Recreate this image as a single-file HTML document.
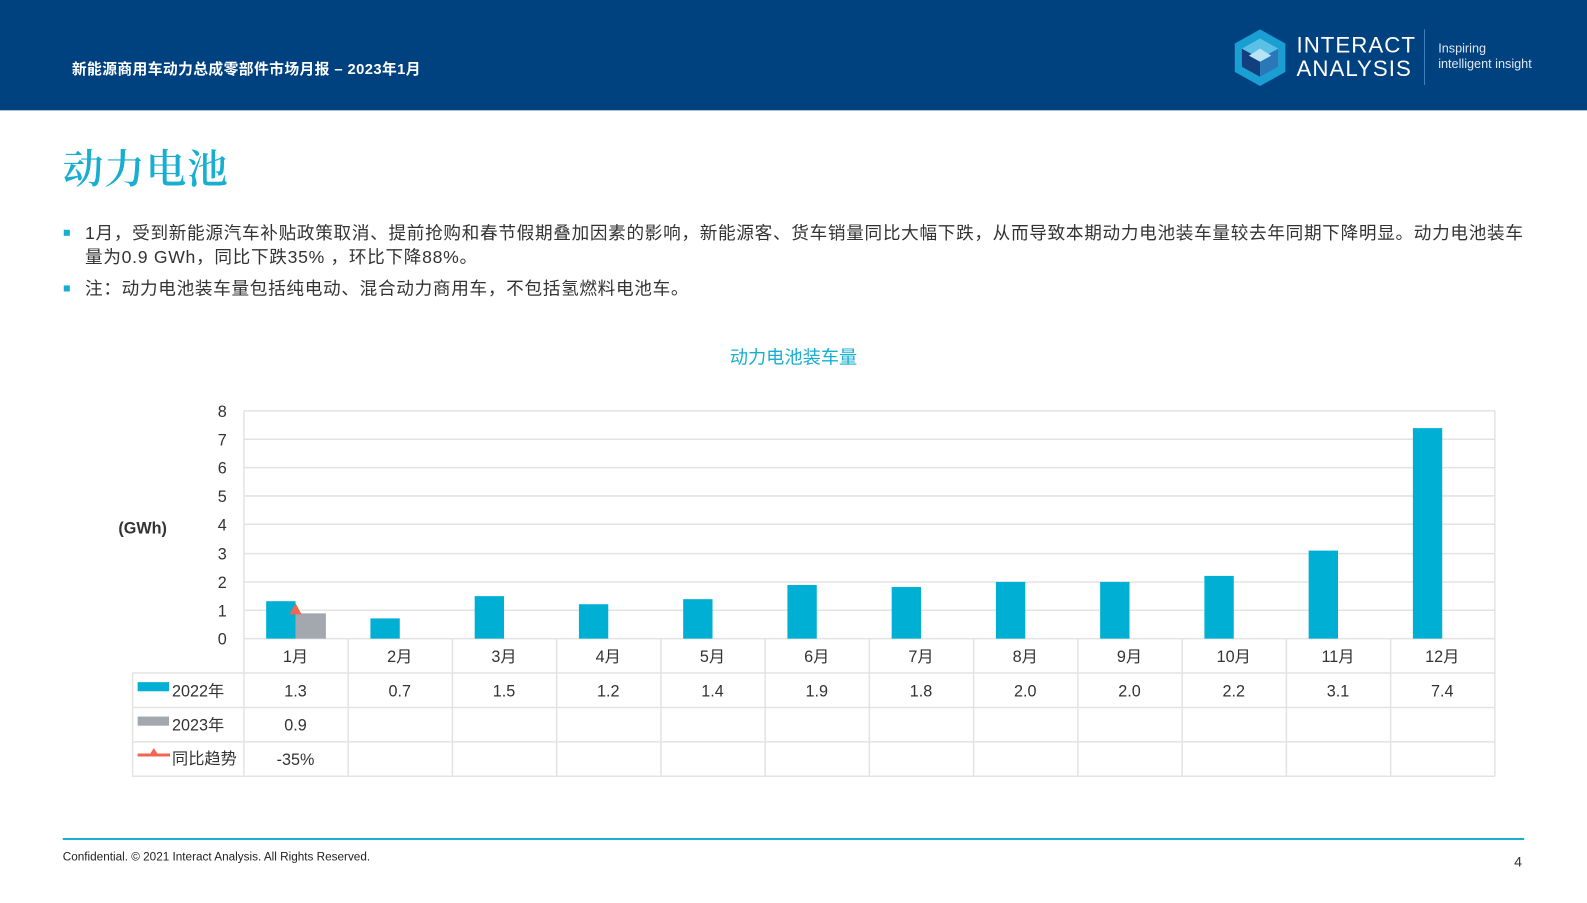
<!DOCTYPE html>
<html><head><meta charset="utf-8"><style>
*{margin:0;padding:0;box-sizing:border-box}
body{width:1587px;height:892px;position:relative;background:#fff;font-family:"Liberation Sans","Noto Sans CJK SC",sans-serif;overflow:hidden;color:#333}
#w{position:absolute;left:0;top:0;width:1568px;height:882px;transform:scale(1.0121);transform-origin:0 0}
.hdr{position:absolute;left:0;top:0;width:1580px;height:109px;background:#004180}
.hdr .t{position:absolute;left:71px;top:57px;color:#fff;font-size:14.6px;font-weight:bold;letter-spacing:0.4px}
.title{position:absolute;left:62px;top:136px;font-family:"Noto Serif CJK SC",serif;font-weight:600;font-size:40px;color:#18aed0;letter-spacing:1px}
.p{position:absolute;left:84px;width:1430px;font-size:17.4px;line-height:24px;color:#333;letter-spacing:0.7px}
.b{position:absolute;left:63px;width:6px;height:6px;background:#18aed0}
.ct{position:absolute;left:0;width:1568px;text-align:center;top:339px;font-size:18px;color:#18aed0}
.foot{position:absolute;left:62px;top:828px;width:1444px;height:2px;background:#18aed0}
</style></head><body><div id="w">
<div class="hdr">
<div class="t">新能源商用车动力总成零部件市场月报 – 2023年1月</div>
<svg style="position:absolute;left:1218px;top:28px" width="54" height="58" viewBox="0 0 54 58">
<polygon points="27,1 52,15 52,43 27,57 2,43 2,15" fill="#1a9fd2"/>
<polygon points="27,10 45,20 45,38 27,48 9,38 9,20" fill="#5bc0e6"/>
<polygon points="9,20 27,30 27,48 9,38" fill="#123f7e"/>
<polygon points="45,20 27,30 27,48 45,38" fill="#2a78b8"/>
<polygon points="27,20 38,27 27,33 16,27" fill="#b7e4f5"/>
</svg>
<div style="position:absolute;left:1281px;top:33px;color:#fff;font-size:22px;line-height:23px;letter-spacing:1px">INTERACT<br>ANALYSIS</div>
<div style="position:absolute;left:1407px;top:29px;width:1px;height:55px;background:#3d7fc0"></div>
<div style="position:absolute;left:1421px;top:41px;color:#dfe8f3;font-size:12.5px;line-height:15px">Inspiring<br>intelligent insight</div>
</div>
<div class="title">动力电池</div>
<div class="b" style="top:227px"></div>
<div class="p" style="top:218px">1月，受到新能源汽车补贴政策取消、提前抢购和春节假期叠加因素的影响，新能源客、货车销量同比大幅下跌，从而导致本期动力电池装车量较去年同期下降明显。动力电池装车量为0.9 GWh，同比下跌35% ，环比下降88%。</div>
<div class="b" style="top:282px"></div>
<div class="p" style="top:273px">注：动力电池装车量包括纯电动、混合动力商用车，不包括氢燃料电池车。</div>
<div class="ct">动力电池装车量</div>
<svg style="position:absolute;left:0;top:0" width="1587" height="892" font-family="Liberation Sans, Noto Sans CJK SC, sans-serif">
<g stroke="#e3e3e3" stroke-width="1.5">
<line x1="241" y1="406" x2="1477" y2="406"/><line x1="241" y1="434" x2="1477" y2="434"/>
<line x1="241" y1="462" x2="1477" y2="462"/><line x1="241" y1="490" x2="1477" y2="490"/>
<line x1="241" y1="518" x2="1477" y2="518"/><line x1="241" y1="547" x2="1477" y2="547"/>
<line x1="241" y1="575" x2="1477" y2="575"/><line x1="241" y1="603" x2="1477" y2="603"/>
<line x1="241" y1="631" x2="1477" y2="631"/>
<line x1="241" y1="406" x2="241" y2="767"/><line x1="1477" y1="406" x2="1477" y2="767"/>
<line x1="131" y1="665" x2="1477" y2="665"/><line x1="131" y1="699" x2="1477" y2="699"/>
<line x1="131" y1="733" x2="1477" y2="733"/><line x1="131" y1="767" x2="1477" y2="767"/>
<line x1="131" y1="665" x2="131" y2="767"/>
<line x1="344" y1="631" x2="344" y2="767"/><line x1="447" y1="631" x2="447" y2="767"/>
<line x1="550" y1="631" x2="550" y2="767"/><line x1="653" y1="631" x2="653" y2="767"/>
<line x1="756" y1="631" x2="756" y2="767"/><line x1="859" y1="631" x2="859" y2="767"/>
<line x1="962" y1="631" x2="962" y2="767"/><line x1="1065" y1="631" x2="1065" y2="767"/>
<line x1="1168" y1="631" x2="1168" y2="767"/><line x1="1271" y1="631" x2="1271" y2="767"/>
<line x1="1374" y1="631" x2="1374" y2="767"/>
</g>
<g font-size="16" fill="#333" text-anchor="end">
<text x="224" y="412">8</text><text x="224" y="440">7</text><text x="224" y="468">6</text>
<text x="224" y="496">5</text><text x="224" y="524">4</text><text x="224" y="553">3</text>
<text x="224" y="581">2</text><text x="224" y="609">1</text><text x="224" y="637">0</text>
</g>
<text x="117" y="527" font-size="16" font-weight="bold" fill="#333">(GWh)</text>
<g fill="#00b0d4">
<rect x="263" y="594" width="29" height="37"/>
<rect x="366" y="611" width="29" height="20"/>
<rect x="469" y="589" width="29" height="42"/>
<rect x="572" y="597" width="29" height="34"/>
<rect x="675" y="592" width="29" height="39"/>
<rect x="778" y="578" width="29" height="53"/>
<rect x="881" y="580" width="29" height="51"/>
<rect x="984" y="575" width="29" height="56"/>
<rect x="1087" y="575" width="29" height="56"/>
<rect x="1190" y="569" width="29" height="62"/>
<rect x="1293" y="544" width="29" height="87"/>
<rect x="1396" y="423" width="29" height="208"/>
</g>
<rect x="292" y="606" width="30" height="25" fill="#a3a8ae"/>
<polygon points="292,596 298,607 286,607" fill="#f06650"/>
<g font-size="16" fill="#333" text-anchor="middle">
<text x="292" y="654">1月</text><text x="395" y="654">2月</text><text x="498" y="654">3月</text>
<text x="601" y="654">4月</text><text x="704" y="654">5月</text><text x="807" y="654">6月</text>
<text x="910" y="654">7月</text><text x="1013" y="654">8月</text><text x="1116" y="654">9月</text>
<text x="1219" y="654">10月</text><text x="1322" y="654">11月</text><text x="1425" y="654">12月</text>
<text x="292" y="688">1.3</text><text x="395" y="688">0.7</text><text x="498" y="688">1.5</text>
<text x="601" y="688">1.2</text><text x="704" y="688">1.4</text><text x="807" y="688">1.9</text>
<text x="910" y="688">1.8</text><text x="1013" y="688">2.0</text><text x="1116" y="688">2.0</text>
<text x="1219" y="688">2.2</text><text x="1322" y="688">3.1</text><text x="1425" y="688">7.4</text>
<text x="292" y="722">0.9</text><text x="292" y="756">-35%</text>
</g>
<rect x="136" y="674" width="31" height="9" fill="#00b0d4"/>
<rect x="136" y="708" width="31" height="9" fill="#a3a8ae"/>
<line x1="136" y1="746" x2="168" y2="746" stroke="#f06650" stroke-width="3"/>
<polygon points="152,739 157,747 147,747" fill="#f06650"/>
<g font-size="16" fill="#333"><text x="170" y="688">2022年</text><text x="170" y="722">2023年</text><text x="170" y="755">同比趋势</text></g>
</svg>
<div class="foot"></div>
<div style="position:absolute;left:62px;top:840px;font-size:11.6px;color:#222">Confidential. © 2021 Interact Analysis. All Rights Reserved.</div>
<div style="position:absolute;left:1496px;top:843px;font-size:14px;color:#333">4</div>
</div></body></html>
